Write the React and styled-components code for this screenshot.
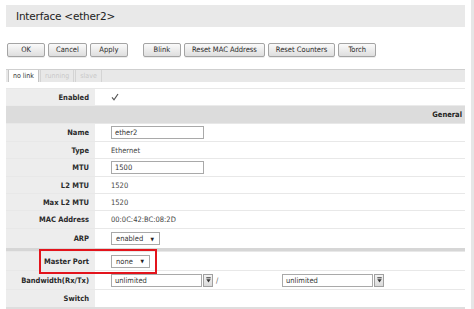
import React from "react";
import styled, { createGlobalStyle } from "styled-components";

const Global = createGlobalStyle`
  html, body { margin: 0; padding: 0; background: #fff; }
  body { font-family: "DejaVu Sans Condensed", "DejaVu Sans", Verdana, sans-serif; font-stretch: condensed; color: #333; }
`;

const Page = styled.div`
  width: 474px;
  height: 309px;
  overflow: hidden;
  padding: 5px 6px 0 6px;
  box-sizing: border-box;
  position: relative;
  border-right: 3px solid #e6e6e6;
`;

const TitleBar = styled.div`
  height: 22px;
  background: #e9e9e9;
  display: flex;
  align-items: center;
  padding-left: 10px;
  font-size: 10.5px;
  color: #222;
  font-family: "DejaVu Sans", Verdana, sans-serif;
  font-stretch: normal;
  letter-spacing: -0.2px;
`;

const Toolbar = styled.div`
  display: flex;
  gap: 3px;
  margin-top: 16px;
  padding-left: 1px;
`;

const Button = styled.button`
  height: 14px;
  min-width: 38px;
  padding: 0 7px;
  margin-left: ${(p) => (p.$gap ? "12px" : "0")};
  border: 1px solid #a4a4a4;
  border-radius: 2px;
  background: linear-gradient(#fafafa, #dedede);
  font-family: inherit;
  font-stretch: condensed;
  font-size: 7.5px;
  color: #2a2a2a;
  line-height: 12px;
  box-sizing: border-box;
  box-shadow: 0 1px 0 #ececec;
`;

const StatusBar = styled.div`
  margin-top: 12px;
  height: 13px;
  background: #e8e8e8;
  border-top: 1px solid #cfcfcf;
  display: flex;
  align-items: stretch;
  padding-left: 2px;
  box-sizing: border-box;
`;

const StatusItem = styled.div`
  font-size: 7px;
  padding: 0 4px;
  display: flex;
  align-items: center;
  color: ${(p) => (p.$on ? "#333" : "#c9c9c9")};
  background: ${(p) => (p.$on ? "#fff" : "transparent")};
  border: 1px solid ${(p) => (p.$on ? "#c4c4c4" : "#d4d4d4")};
  border-top: none;
  border-bottom: none;
  margin-right: 1px;
`;

const Table = styled.div`
  margin-top: 6px;
  border-bottom: 2px solid #dedede;
`;

const Row = styled.div`
  position: relative;
  display: flex;
  height: ${(p) => p.$h || 17}px;
  border-top: 1px solid #e8e8e8;
  box-sizing: border-box;
`;

const Label = styled.div`
  width: 89px;
  flex: none;
  background: #ededed;
  display: flex;
  align-items: center;
  justify-content: flex-end;
  padding-right: 6px;
  box-sizing: border-box;
  font-weight: bold;
  font-size: 7.5px;
  color: #2a2a2a;
  white-space: nowrap;
`;

const Value = styled.div`
  flex: 1;
  display: flex;
  align-items: center;
  padding-left: 16px;
  font-size: 7.5px;
  color: #444;
`;

const SectionRow = styled.div`
  height: 18px;
  background: #dcdcdc;
  display: flex;
  align-items: center;
  justify-content: flex-end;
  padding-right: 3px;
  font-weight: bold;
  font-size: 7.5px;
  color: #222;
  border-top: 1px solid #ebebeb;
  box-sizing: border-box;
`;

const Separator = styled.div`
  height: 3px;
  background: #d6d6d6;
`;

const TextInput = styled.div`
  width: ${(p) => p.$w || 93}px;
  height: 13px;
  border: 1px solid #a9a9a9;
  box-sizing: border-box;
  background: #fff;
  display: flex;
  align-items: center;
  padding-left: 3px;
  font-size: 7.5px;
  color: #333;
`;

const Select = styled.div`
  width: ${(p) => p.$w}px;
  height: 13px;
  border: 1px solid #a9a9a9;
  box-sizing: border-box;
  background: #fff;
  display: flex;
  align-items: center;
  justify-content: space-between;
  padding: 0 5px 0 4px;
  font-size: 7.5px;
  color: #333;
`;

const Arrow = styled.span`
  font-size: 5px;
  color: #222;
`;

const SpinButton = styled.div`
  width: 10px;
  height: 13px;
  margin-left: 1px;
  border: 1px solid #a0a0a0;
  box-sizing: border-box;
  background: linear-gradient(#f4f4f4, #dadada);
  display: flex;
  align-items: center;
  justify-content: center;
`;

const RateGroup = styled.div`
  display: flex;
  align-items: center;
  width: 171px;
  flex: none;
`;

const Slash = styled.span`
  margin-left: 3px;
  font-size: 7.5px;
  color: #666;
`;

const Highlight = styled.div`
  position: absolute;
  z-index: 5;
  left: 33px;
  top: -3px;
  width: 118px;
  height: 25px;
  border: 2px solid #e3141c;
  box-sizing: border-box;
  pointer-events: none;
`;

const Check = () => (
  <svg width="8" height="8" viewBox="0 0 8 8">
    <path d="M1 4.4 L3 6.8 L7 1" fill="none" stroke="#555" strokeWidth="1.2" />
  </svg>
);

const DownIcon = () => (
  <svg width="5" height="6" viewBox="0 0 5 6">
    <rect x="0.3" y="0.3" width="4.4" height="1" fill="#333" />
    <path d="M0.3 2.3 H4.7 L2.5 5.6 Z" fill="#333" />
  </svg>
);

const Rate = ({ last }) => (
  <RateGroup>
    <TextInput $w={91}>unlimited</TextInput>
    <SpinButton>
      <DownIcon />
    </SpinButton>
    {!last && <Slash>/</Slash>}
  </RateGroup>
);

export default function App() {
  return (
    <>
      <Global />
      <Page>
        <TitleBar>Interface &lt;ether2&gt;</TitleBar>
        <Toolbar>
          <Button>OK</Button>
          <Button>Cancel</Button>
          <Button>Apply</Button>
          <Button $gap>Blink</Button>
          <Button>Reset MAC Address</Button>
          <Button>Reset Counters</Button>
          <Button>Torch</Button>
        </Toolbar>
        <StatusBar>
          <StatusItem $on>no link</StatusItem>
          <StatusItem>running</StatusItem>
          <StatusItem>slave</StatusItem>
        </StatusBar>
        <Table>
          <Row $h={17}>
            <Label>Enabled</Label>
            <Value>
              <Check />
            </Value>
          </Row>
          <SectionRow>General</SectionRow>
          <Row $h={18}>
            <Label>Name</Label>
            <Value>
              <TextInput>ether2</TextInput>
            </Value>
          </Row>
          <Row $h={17}>
            <Label>Type</Label>
            <Value>Ethernet</Value>
          </Row>
          <Row $h={18}>
            <Label>MTU</Label>
            <Value>
              <TextInput>1500</TextInput>
            </Value>
          </Row>
          <Row $h={17}>
            <Label>L2 MTU</Label>
            <Value>1520</Value>
          </Row>
          <Row $h={17}>
            <Label>Max L2 MTU</Label>
            <Value>1520</Value>
          </Row>
          <Row $h={18}>
            <Label>MAC Address</Label>
            <Value>00:0C:42:BC:08:2D</Value>
          </Row>
          <Row $h={20}>
            <Label>ARP</Label>
            <Value>
              <Select $w={49}>
                enabled <Arrow>▼</Arrow>
              </Select>
            </Value>
          </Row>
          <Separator />
          <Row $h={19}>
            <Label>Master Port</Label>
            <Value>
              <Select $w={39}>
                none <Arrow>▼</Arrow>
              </Select>
            </Value>
            <Highlight />
          </Row>
          <Row $h={19}>
            <Label>Bandwidth(Rx/Tx)</Label>
            <Value>
              <Rate />
              <Rate last />
            </Value>
          </Row>
          <Row $h={18}>
            <Label>Switch</Label>
            <Value />
          </Row>
        </Table>
      </Page>
    </>
  );
}
